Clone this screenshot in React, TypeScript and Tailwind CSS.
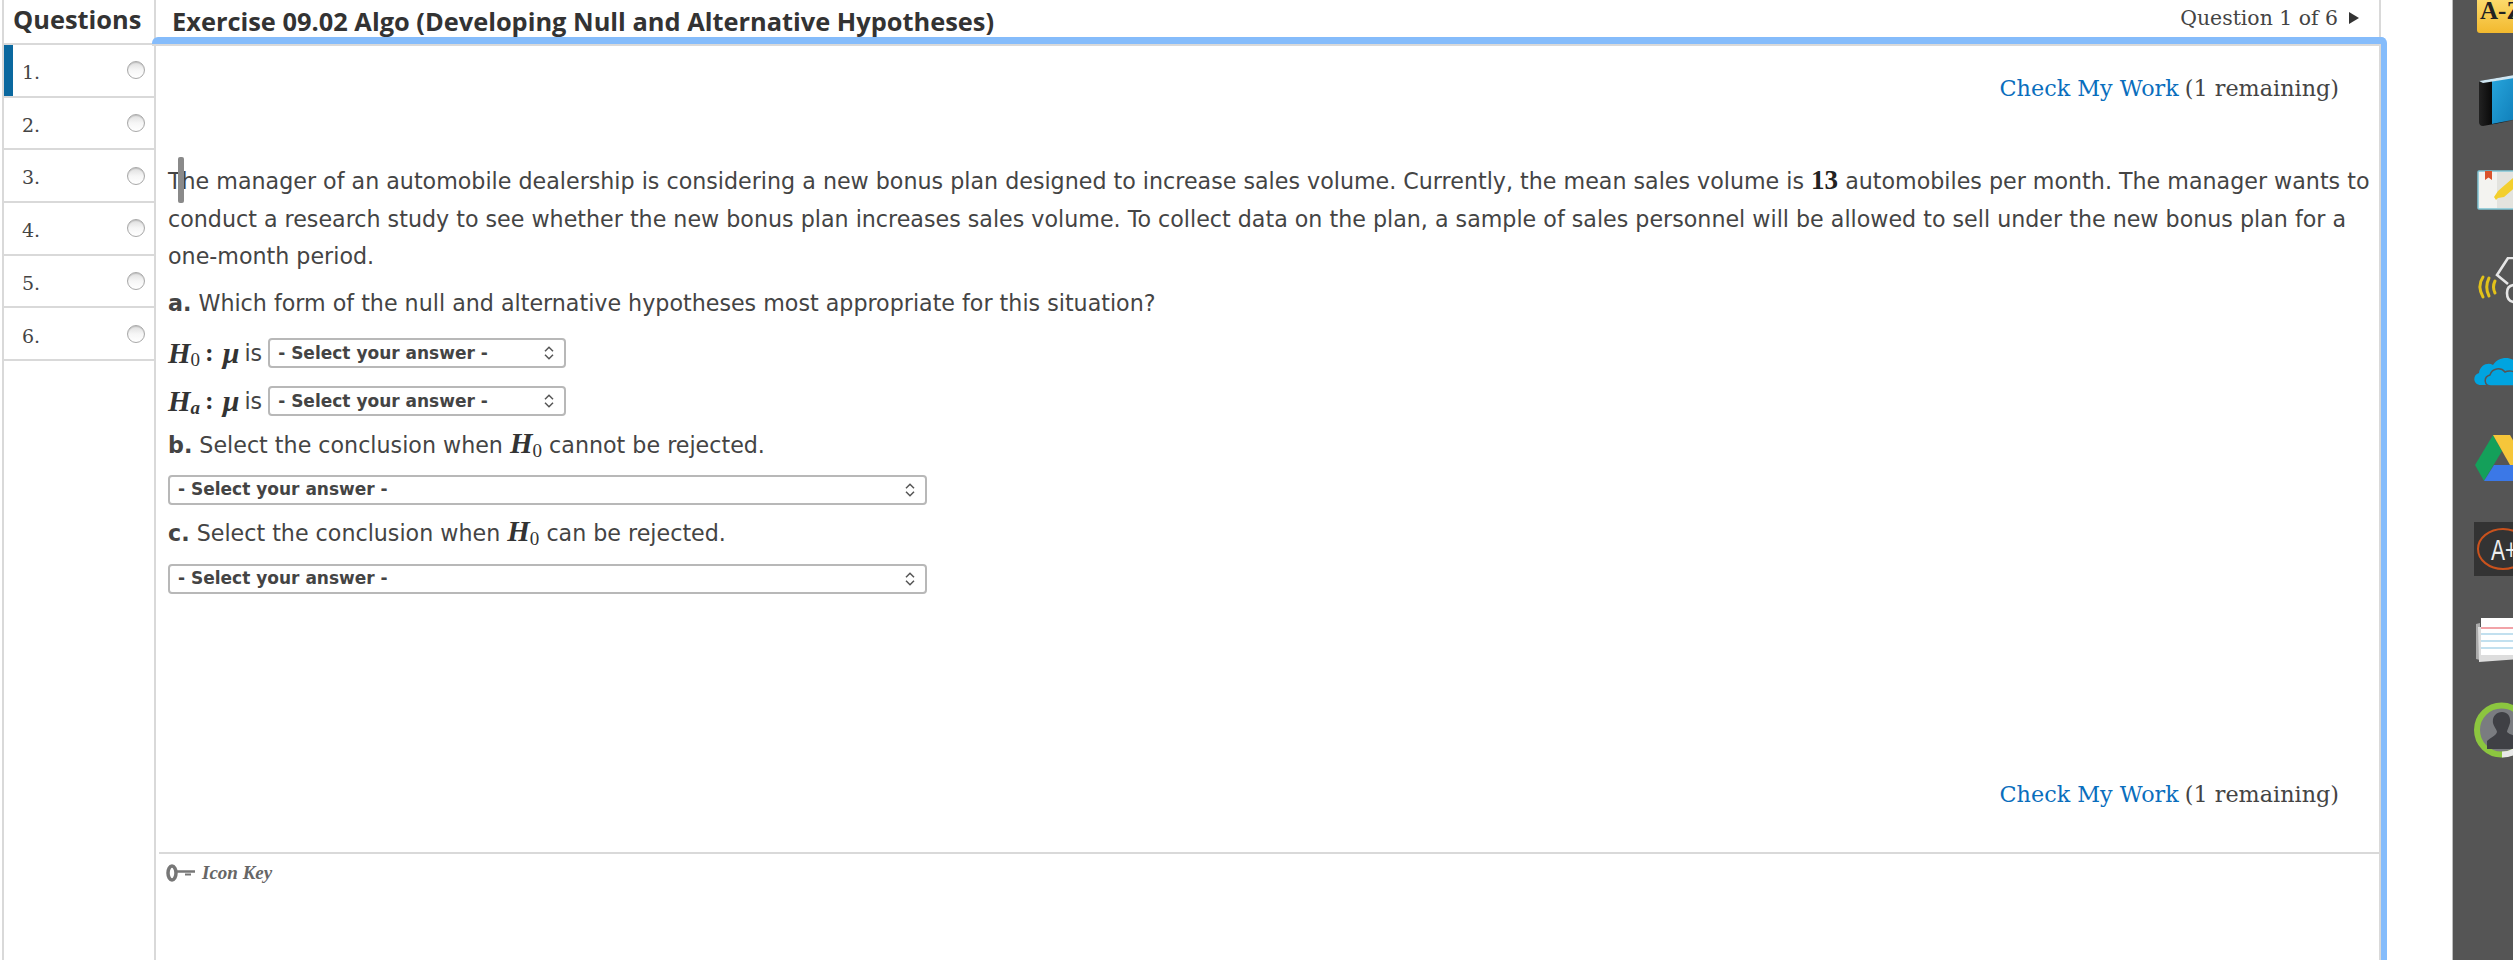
const rows = [1, 2, 3, 4, 5, 6];

function Radio() {
  return <span className="-mr-[1px] h-[18px] w-[18px] rounded-full border border-[#a8a8a8] bg-gradient-to-b from-[#dedede] via-[#f6f6f6] to-white shadow-[inset_0_1px_1px_rgba(0,0,0,0.15)]" />;
}

function UpDown() {
  return (
    <svg width="12" height="16" viewBox="0 0 12 16" fill="none" stroke="#555" strokeWidth="1.5">
      <path d="M2 6.2L6 2.2l4 4M2 9.8l4 4 4-4" />
    </svg>
  );
}

function Select({ className }: { className: string }) {
  return (
    <div className={`flex h-[30px] items-center justify-between rounded-[4px] border-2 border-[#b8b8b8] bg-white pl-[8px] pr-[9px] text-[17px] font-bold text-[#444] ${className}`}>
      <span>- Select your answer -</span>
      <UpDown />
    </div>
  );
}

function H({ sub, italic }: { sub: string; italic?: boolean }) {
  return (
    <span className="font-['Liberation_Serif',serif] text-[29px] font-bold italic text-[#333]">
      H
      <sub className={`bottom-[-0.2em] text-[19px] ${italic ? 'italic' : 'not-italic font-normal'}`}>{sub}</sub>
    </span>
  );
}

function CheckWork() {
  return (
    <div className="flex justify-end pr-[40px] font-['DejaVu_Serif',serif] text-[22.3px] leading-[32px] text-[#444]">
      <span className="text-[#0a6ebd]">Check My Work</span>
      <span className="ml-[6px]">(1 remaining)</span>
    </div>
  );
}

function HypothesisRow({ sub, italic, className }: { sub: string; italic?: boolean; className: string }) {
  return (
    <div className={`flex h-[30px] items-center gap-[5px] text-[22.2px] leading-[30px] ${className}`}>
      <H sub={sub} italic={italic} />
      <span className="font-['Liberation_Serif',serif] text-[26px] font-bold text-[#333]">:</span>
      <span className="ml-[4px] font-['Liberation_Serif',serif] text-[30px] font-bold italic text-[#333]">μ</span>
      <span className="mr-[1px]">is</span>
      <Select className="w-[298px]" />
    </div>
  );
}

function SideIcons() {
  return (
    <div className="h-[960px] w-[61px] shrink-0 overflow-hidden border-l border-[#bdbdbd] bg-[#555]">
      <svg className="block" width="61" height="34" viewBox="0 0 61 34">
        <defs>
          <linearGradient id="az" x1="0" y1="0" x2="0" y2="1">
            <stop offset="0" stopColor="#ffe27a" />
            <stop offset="1" stopColor="#f2b92e" />
          </linearGradient>
        </defs>
        <rect x="24" y="-8" width="50" height="41" rx="3" fill="url(#az)" />
        <text x="27" y="19" fontFamily="Liberation Serif, serif" fontWeight="700" fontSize="25" fill="#222">A-Z</text>
      </svg>
      <svg className="mt-[39px] block" width="61" height="54" viewBox="0 0 61 54">
        <defs>
          <linearGradient id="bk" x1="0" y1="0" x2="1" y2="0">
            <stop offset="0" stopColor="#222" />
            <stop offset="0.5" stopColor="#000" />
            <stop offset="1" stopColor="#555" />
          </linearGradient>
          <linearGradient id="bc" x1="0" y1="0" x2="1" y2="1">
            <stop offset="0" stopColor="#27a5dc" />
            <stop offset="1" stopColor="#0f7db8" />
          </linearGradient>
        </defs>
        <path d="M26 8l36-6v45l-32 6c-3 0-4-2-4-4z" fill="url(#bk)" />
        <path d="M39 8l24-4v42l-24 5z" fill="url(#bc)" />
        <path d="M26 8l36-6v3L30 10z" fill="#cfe6f2" />
      </svg>
      <svg className="mt-[43px] block" width="61" height="42" viewBox="0 0 61 42">
        <rect x="25" y="1" width="40" height="38" rx="1" fill="#f3f3f0" stroke="#7fc3d2" strokeWidth="1.5" />
        <path d="M32 1h7v9l-3.500-2.500L32 10z" fill="#d9532c" />
        <rect x="44" y="2" width="20" height="36" fill="#e3e3de" />
        <path d="M41 27l4-6 16-14 6 6-16 14-6 1-2 2z" fill="#f3cf2d" />
      </svg>
      <svg className="mt-[45px] block" width="61" height="50" viewBox="0 0 61 50" fill="none">
        <path d="M30 20c-4 6-4 13 0 20M36 21c-3 6-3 12 0 18M42 24c-2 4-2 8 0 12" stroke="#e2c21a" strokeWidth="3" strokeLinecap="round" />
        <path d="M62 1h-7L44 18l11 9M62 28c-6 0-8 3-8 8s2 9 8 9" stroke="#e6e6e6" strokeWidth="2.600" />
      </svg>
      <svg className="mt-[46px] block" width="61" height="36" viewBox="0 0 61 36">
        <path d="M28 32c-8 0-9-10-2-12 1-8 9-11 14-8 5-8 17-10 24-2v22z" fill="#00a4e0" />
        <path d="M38 33c-7 0-8-9-1-11 2-7 11-8 15-3 4-2 9-1 12 2v12z" fill="#00a4e0" stroke="#555" strokeWidth="1.500" />
      </svg>
      <svg className="mt-[46px] block" width="61" height="46" viewBox="0 0 61 46">
        <path d="M40 0L22 30l9 16 18-30z" fill="#14a05a" />
        <path d="M40 0h17l17 30H57z" fill="#f6c63a" />
        <path d="M41 30h31l-9 16H31z" fill="#3b78e7" />
      </svg>
      <svg className="mt-[41px] block" width="61" height="55" viewBox="0 0 61 55">
        <rect x="21" y="0" width="45" height="54" fill="#333" />
        <ellipse cx="50" cy="27" rx="25" ry="20" fill="none" stroke="#c9521d" strokeWidth="2" />
        <text transform="translate(38 38) scale(0.7 1)" fontFamily="Liberation Sans, sans-serif" fontSize="30" fill="#eee">A+</text>
      </svg>
      <svg className="mt-[40px] block" width="61" height="45" viewBox="0 0 61 45">
        <path d="M23 7l4-1v37l-4-1z" fill="#aaa" />
        <path d="M25 10h40v32l-39 3z" fill="#ddd" />
        <rect x="28" y="1" width="38" height="37" fill="#fff" />
        <path d="M28 11h38" stroke="#f2a3a8" strokeWidth="2" />
        <path d="M28 17h38M28 24h38M28 31h38" stroke="#aed6ea" strokeWidth="1.500" />
      </svg>
      <svg className="mt-[40px] block" width="61" height="58" viewBox="0 0 61 58">
        <circle cx="48.500" cy="28" r="24.500" fill="#7a7c80" stroke="#8cc63f" strokeWidth="6" />
        <path d="M49 10c6 0 9 5 8 11-1 4-3 7-3 9 3 3 8 3 12 7v10H34v-8c4-4 9-5 10-9 0-2-3-5-4-9-1-6 3-11 9-11z" fill="#3f4045" />
        <path d="M49 52.500a24.500 24.500 0 0 0 13-3.500" fill="none" stroke="#e8e8e8" strokeWidth="6" />
      </svg>
    </div>
  );
}

export default function App() {
  return (
    <div className="flex h-[960px] w-[2513px] overflow-hidden bg-white font-['DejaVu_Sans',sans-serif] text-[#444]">
      <div className="flex min-w-0 flex-1 pl-[2px]">
        {/* Question list */}
        <div className="w-[154px] shrink-0 border-x-2 border-[#d9d9d9]">
          <div className="h-[45px] border-b-2 border-[#d9d9d9] pl-[9px] font-['Open_Sans',sans-serif] text-[25.4px] font-bold leading-[39px] text-[#333]">
            Questions
          </div>
          {rows.map((n) => (
            <div key={n} className="relative flex h-[52.7px] items-center justify-between border-b-2 border-[#d9d9d9] pl-[18px] pr-[10px] font-['DejaVu_Serif',serif] text-[19px] text-[#444]">
              {n === 1 && <span className="absolute bottom-0 left-0 top-0 w-[9px] bg-[#0a689f]" />}
              <span className="pt-[4px]">{n}.</span>
              <Radio />
            </div>
          ))}
        </div>

        {/* Question body */}
        <div className="flex w-[2231px] shrink-0 flex-col">
          <div className="flex h-[37px] w-[2225px] items-center justify-between border-r-2 border-[#d9d9d9] pl-[16px] pr-[20px]">
            <span className="pt-[5px] font-['Open_Sans',sans-serif] text-[25.4px] font-bold text-[#333]">
              Exercise 09.02 Algo (Developing Null and Alternative Hypotheses)
            </span>
            <span className="flex items-center gap-[11px] font-['DejaVu_Serif',serif] text-[20.4px] text-[#444]">
              Question 1 of 6
              <svg width="10" height="12" viewBox="0 0 10 12"><path d="M0 0l10 6-10 6z" fill="#333" /></svg>
            </span>
          </div>
          <div className="relative -ml-[4px] flex flex-1 flex-col rounded-tl-[6px] rounded-tr-[6px] border-r-[6px] border-t-[7px] border-[#85bcfb]">
            <div className="flex flex-1 flex-col border-r-2 border-t-2 border-[#d9d9d9] pl-[16px]">
              <div className="pt-[26px]">
                <CheckWork />
              </div>
              <span className="absolute left-[26px] top-[113px] h-[46px] w-[6px] rounded-[2px] bg-[#8a8a8a]" />
              <p className="mt-[59px] w-[2210px] text-[22.2px] leading-[37.5px]">
                The manager of an automobile dealership is considering a new bonus plan designed to increase sales volume. Currently, the mean sales volume is{' '}
                <span className="font-['Liberation_Serif',serif] text-[27px] font-bold leading-none text-[#222]">13</span> automobiles per month. The manager wants to conduct a research study to see whether the new bonus plan increases sales volume. To collect data on the plan, a sample of sales personnel will be allowed to sell under the new bonus plan for a one-month period.
              </p>
              <p className="mt-[9.5px] text-[22.2px] leading-[37.5px]">
                <b>a.</b> Which form of the null and alternative hypotheses most appropriate for this situation?
              </p>
              <HypothesisRow sub="0" className="mt-[15px]" />
              <HypothesisRow sub="a" italic className="mt-[18px]" />
              <p className="mt-[9.5px] text-[22.2px] leading-[37.5px]">
                <b>b.</b> Select the conclusion when <H sub="0" /> cannot be rejected.
              </p>
              <Select className="mt-[10.5px] w-[759px]" />
              <p className="mt-[8px] text-[22.2px] leading-[37.5px]">
                <b>c.</b> Select the conclusion when <H sub="0" /> can be rejected.
              </p>
              <Select className="mt-[11px] w-[759px]" />
              <div className="mt-[184px]">
                <CheckWork />
              </div>
              <div className="-ml-[9px] mt-[42.5px] flex items-center gap-[7px] border-t-2 border-[#d9d9d9] pl-[7px] pt-[5px] font-['Liberation_Serif',serif] text-[19px] font-bold italic text-[#666]">
                <svg width="29" height="20" viewBox="0 0 29 20" fill="none" stroke="#777">
                  <ellipse cx="6" cy="10" rx="4" ry="7" strokeWidth="3.500" />
                  <path d="M10 8.500h19" strokeWidth="2.500" />
                  <path d="M19 11.500h6" strokeWidth="2" />
                </svg>
                Icon Key
              </div>
            </div>
          </div>
        </div>
      </div>
      <SideIcons />
    </div>
  );
}
